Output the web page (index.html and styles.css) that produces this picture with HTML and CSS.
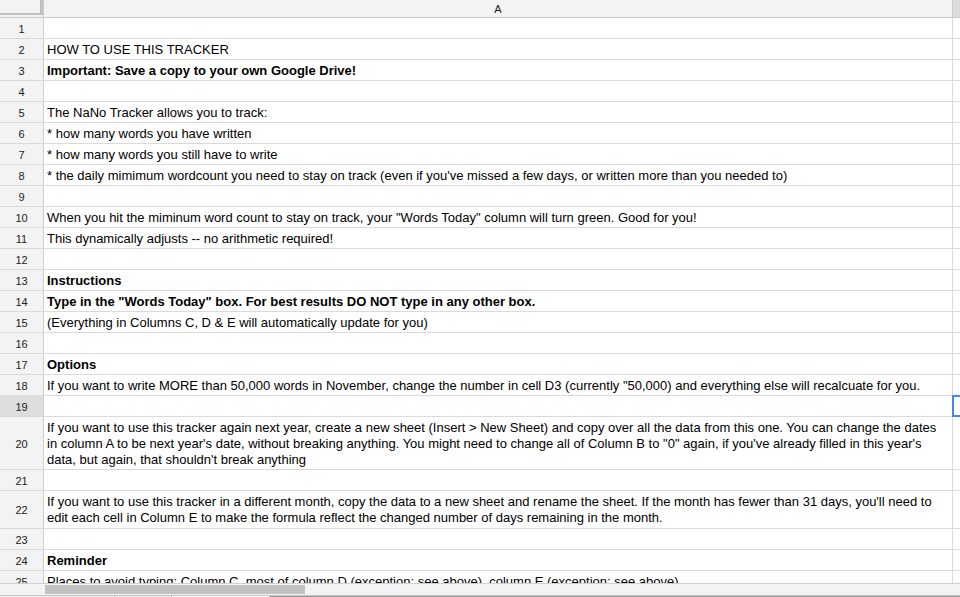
FILE: index.html
```html
<!DOCTYPE html>
<html lang="en">

<head>
    <meta charset="UTF-8">
    <meta name="viewport" content="width=device-width, initial-scale=1.0">
    <title>NaNo Tracker - How to use</title>
    <link rel="stylesheet" href="styles.css">
</head>

<body>
    <div class="sheet">
        <!-- column headers -->
        <div class="row head">
            <div class="num corner"><div class="freeze"></div></div>
            <div class="cell">A</div>
            <div class="rest"></div>
        </div>

        <div class="row"><div class="num">1</div><div class="cell"></div><div class="rest"></div></div>
        <div class="row"><div class="num">2</div><div class="cell">HOW TO USE THIS TRACKER</div><div class="rest"></div></div>
        <div class="row"><div class="num">3</div><div class="cell bold">Important: Save a copy to your own Google Drive!</div><div class="rest"></div></div>
        <div class="row"><div class="num">4</div><div class="cell"></div><div class="rest"></div></div>
        <div class="row"><div class="num">5</div><div class="cell">The NaNo Tracker allows you to track:</div><div class="rest"></div></div>
        <div class="row"><div class="num">6</div><div class="cell">* how many words you have written</div><div class="rest"></div></div>
        <div class="row"><div class="num">7</div><div class="cell">* how many words you still have to write</div><div class="rest"></div></div>
        <div class="row"><div class="num">8</div><div class="cell">* the daily mimimum wordcount you need to stay on track (even if you've missed a few days, or written more than you needed to)</div><div class="rest"></div></div>
        <div class="row"><div class="num">9</div><div class="cell"></div><div class="rest"></div></div>
        <div class="row"><div class="num">10</div><div class="cell">When you hit the miminum word count to stay on track, your "Words Today" column will turn green. Good for you!</div><div class="rest"></div></div>
        <div class="row"><div class="num">11</div><div class="cell">This dynamically adjusts -- no arithmetic required!</div><div class="rest"></div></div>
        <div class="row"><div class="num">12</div><div class="cell"></div><div class="rest"></div></div>
        <div class="row"><div class="num">13</div><div class="cell bold">Instructions</div><div class="rest"></div></div>
        <div class="row"><div class="num">14</div><div class="cell bold">Type in the "Words Today" box. For best results DO NOT type in any other box.</div><div class="rest"></div></div>
        <div class="row"><div class="num">15</div><div class="cell">(Everything in Columns C, D &amp; E will automatically update for you)</div><div class="rest"></div></div>
        <div class="row"><div class="num">16</div><div class="cell"></div><div class="rest"></div></div>
        <div class="row"><div class="num">17</div><div class="cell bold">Options</div><div class="rest"></div></div>
        <div class="row"><div class="num">18</div><div class="cell">If you want to write MORE than 50,000 words in November, change the number in cell D3 (currently "50,000) and everything else will recalcuate for you.</div><div class="rest"></div></div>
        <div class="row"><div class="num active">19</div><div class="cell"></div><div class="rest selected"></div></div>
        <div class="row tall3"><div class="num">20</div><div class="cell">If you want to use this tracker again next year, create a new sheet (Insert &gt; New Sheet) and copy over all the data from this one. You can change the dates in column A to be next year's date, without breaking anything. You might need to change all of Column B to "0" again, if you've already filled in this year's data, but again, that shouldn't break anything</div><div class="rest"></div></div>
        <div class="row"><div class="num">21</div><div class="cell"></div><div class="rest"></div></div>
        <div class="row tall2"><div class="num">22</div><div class="cell">If you want to use this tracker in a different month, copy the data to a new sheet and rename the sheet. If the month has fewer than 31 days, you'll need to edit each cell in Column E to make the formula reflect the changed number of days remaining in the month.</div><div class="rest"></div></div>
        <div class="row"><div class="num">23</div><div class="cell"></div><div class="rest"></div></div>
        <div class="row"><div class="num">24</div><div class="cell bold">Reminder</div><div class="rest"></div></div>
        <div class="row"><div class="num">25</div><div class="cell">Places to avoid typing: Column C, most of column D (exception: see above), column E (exception: see above)</div><div class="rest"></div></div>
    </div>

    <!-- horizontal scrollbar and sheet tabs -->
    <div class="hscroll">
        <div class="thumb"></div>
    </div>
    <div class="tabs">
        <div class="tab first"></div>
        <div class="tab"></div>
        <div class="tab current"></div>
        <div class="tab last"></div>
    </div>
</body>

</html>
```

FILE: styles.css
```css
body {
    margin: 0;
    overflow: hidden;
    background-color: #fff;
    font-family: "Liberation Sans", Arial, Helvetica, sans-serif;
    color: #000;
}

.sheet {
    height: 583px;
    overflow: hidden;
}

.row {
    display: flex;
    height: 20px;
    border-bottom: 1px solid #dadada;
}

.row.tall3 {
    height: 52px;
}

.row.tall2 {
    height: 37px;
}

.num {
    width: 44px;
    flex: none;
    display: flex;
    align-items: center;
    justify-content: center;
    padding-top: 1px;
    box-sizing: border-box;
    background-color: #f3f3f3;
    border-right: 1px solid #cccccc;
    font-size: 11px;
    color: #222;
}

.num.active {
    background-color: #dddddd;
}

.cell {
    width: 902px;
    flex: none;
    display: flex;
    align-items: center;
    padding: 1px 3px 0;
    border-right: 1px solid #dadada;
    font-size: 13px;
    line-height: 16px;
    overflow: hidden;
    white-space: normal;
}

.bold {
    font-weight: bold;
}

.rest {
    flex: 1;
    position: relative;
}

/* selected cell B19 */
.rest.selected::after {
    content: "";
    position: absolute;
    top: -1px;
    left: -1px;
    right: -4px;
    bottom: -1px;
    border: 2px solid #4285f4;
}

/* column header row */
.row.head {
    height: 17px;
    border-bottom: 1px solid #c9c9c9;
    background-color: #f3f3f3;
}

.row.head .cell {
    justify-content: center;
    padding-top: 0;
    font-size: 11px;
    color: #222;
    border-right-color: #cccccc;
}

.row.head .rest {
    background-color: #dddddd;
}

.num.corner {
    padding-top: 0;
    align-items: flex-start;
    justify-content: flex-start;
}

.freeze {
    width: 40px;
    height: 13px;
    flex: none;
    border-right: 3px solid #c0c0c0;
    border-bottom: 2px solid #c0c0c0;
    background-color: #f3f3f3;
}

.hscroll {
    height: 10px;
    padding: 1px 0 0 45px;
    border-top: 1px solid #cfcfcf;
    background-color: #f3f3f3;
}

.thumb {
    width: 260px;
    height: 9px;
    background-color: #c1c1c1;
}

.tabs {
    display: flex;
    height: 4px;
    border-top: 1px solid #c4c4c4;
    background-color: #f0f0f0;
}

.tab {
    width: 56px;
    border-right: 1px solid #c4c4c4;
}

.tab.first {
    width: 114px;
}

.tab.current {
    width: 97px;
    background-color: #fff;
}

.tab.last {
    flex: 1;
    border-right: none;
    border-top: 1px solid #9a9a9a;
}
```
